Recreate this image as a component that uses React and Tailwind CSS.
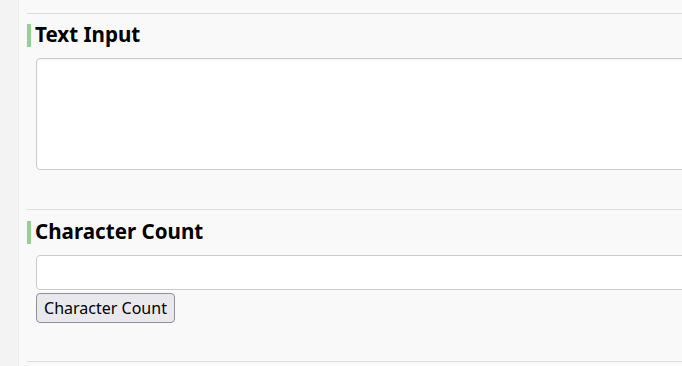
export default function App() {
  return (
    <div className="flex h-[366px] w-[682px] overflow-hidden bg-[#f9f9f9]" style={{ fontFamily: '"Noto Sans", "DejaVu Sans", sans-serif' }}>
      <aside className="w-[19px] shrink-0 border-r border-[#ececec] bg-[#f3f3f3]" />
      <main className="flex-1 pl-[8px] pt-[13px]">
        <section className="border-t border-[#dddddd] pt-[10px] h-[196px]">
          <h2 className="border-l-4 border-[#98cd98] pl-[4px] pb-[2px] text-[20.6px] font-bold leading-[21px] text-black">Text Input</h2>
          <textarea className="mt-[11px] ml-[9px] block h-[112px] w-[700px] resize-none rounded-[4px] border border-[#cccccc] bg-white shadow-[inset_0_1px_2px_rgba(0,0,0,0.06)]" />
        </section>
        <section className="border-t border-[#dddddd] pt-[11px] h-[152px]">
          <h2 className="border-l-4 border-[#98cd98] pl-[4px] pb-[2px] text-[20.6px] font-bold leading-[21px] text-black">Character Count</h2>
          <input type="text" className="mt-[11px] ml-[9px] block h-[35px] w-[700px] rounded-[4px] border border-[#cccccc] bg-white" />
          <button className="mt-[3px] ml-[9px] block h-[30px] w-[139px] rounded-[4px] border border-[#8f8f9d] bg-[#e9e9ed] text-[16px] text-black">Character Count</button>
        </section>
        <div className="border-t border-[#dddddd]" />
      </main>
    </div>
  );
}
